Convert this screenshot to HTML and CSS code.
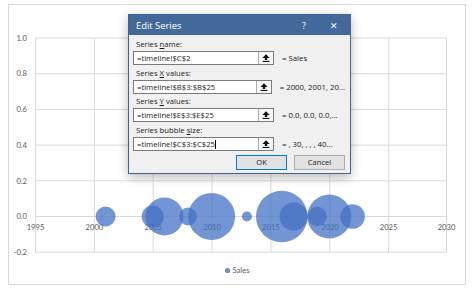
FILE: index.html
```html
<!DOCTYPE html>
<html>
<head>
<meta charset="utf-8">
<link rel="stylesheet" href="styles.css">
</head>
<body>
<div class="stage">
  <div class="chart">
    <svg class="plot" width="456" height="279" viewBox="9 5 456 279">
      <g class="grid">
        <line x1="35" y1="38" x2="447" y2="38"/>
        <line x1="35" y1="73.7" x2="447" y2="73.7"/>
        <line x1="35" y1="109.4" x2="447" y2="109.4"/>
        <line x1="35" y1="145.1" x2="447" y2="145.1"/>
        <line x1="35" y1="180.8" x2="447" y2="180.8"/>
        <line x1="35" y1="216.5" x2="447" y2="216.5"/>
        <line x1="35" y1="252.2" x2="447" y2="252.2"/>
        <line x1="35.5" y1="38" x2="35.5" y2="252.2"/>
        <line x1="94.4" y1="38" x2="94.4" y2="252.2"/>
        <line x1="153.2" y1="38" x2="153.2" y2="252.2"/>
        <line x1="212.1" y1="38" x2="212.1" y2="252.2"/>
        <line x1="270.9" y1="38" x2="270.9" y2="252.2"/>
        <line x1="329.8" y1="38" x2="329.8" y2="252.2"/>
        <line x1="388.6" y1="38" x2="388.6" y2="252.2"/>
        <line x1="446.5" y1="38" x2="446.5" y2="252.2"/>
      </g>
      <g class="ylabels">
        <text x="27" y="40.7">1.0</text>
        <text x="27" y="76.4">0.8</text>
        <text x="27" y="112.1">0.6</text>
        <text x="27" y="147.8">0.4</text>
        <text x="27" y="183.5">0.2</text>
        <text x="27" y="219.2">0.0</text>
        <text x="27" y="254.9">-0.2</text>
      </g>
      <g class="xlabels">
        <text x="35.5" y="229.5">1995</text>
        <text x="94.4" y="229.5">2000</text>
        <text x="153.2" y="229.5">2005</text>
        <text x="212.1" y="229.5">2010</text>
        <text x="270.9" y="229.5">2015</text>
        <text x="329.8" y="229.5">2020</text>
        <text x="388.6" y="229.5">2025</text>
        <text x="446.5" y="229.5">2030</text>
      </g>
      <g class="bubbles">
        <circle cx="105.6" cy="216.5" r="10"/>
        <circle cx="152.7" cy="216.5" r="11"/>
        <circle cx="164.5" cy="216.5" r="19"/>
        <circle cx="188" cy="216.5" r="9"/>
        <circle cx="211.6" cy="216.5" r="23.5"/>
        <circle cx="246.9" cy="216.5" r="5"/>
        <circle cx="281.8" cy="216.5" r="25.8"/>
        <circle cx="293.6" cy="216.5" r="14"/>
        <circle cx="317.2" cy="216.5" r="9.7"/>
        <circle cx="329.3" cy="216.5" r="22"/>
        <circle cx="352.6" cy="216.5" r="12.3"/>
      </g>
      <g class="legend">
        <circle cx="227.5" cy="270.5" r="2.6"/>
        <text x="232.5" y="273">Sales</text>
      </g>
    </svg>
  </div>

  <div class="dialog">
    <div class="titlebar">
      <span class="title">Edit Series</span>
      <span class="help">?</span>
      <span class="close">&#x2715;</span>
    </div>
    <div class="body">
      <div class="field">
        <div class="label">Series <u>n</u>ame:</div>
        <div class="row">
          <div class="input"><span class="text">=timeline!$C$2</span><span class="pick"><svg width="8" height="8" viewBox="0 0 8 8"><polygon points="4,0.3 7.6,3.9 5.2,3.9 5.2,5.9 2.8,5.9 2.8,3.9 0.4,3.9"/><rect x="0.6" y="6.9" width="6.8" height="1.1"/></svg></span></div>
          <span class="value">= Sales</span>
        </div>
      </div>
      <div class="field">
        <div class="label">Series <u>X</u> values:</div>
        <div class="row">
          <div class="input"><span class="text">=timeline!$B$3:$B$25</span><span class="pick"><svg width="8" height="8" viewBox="0 0 8 8"><polygon points="4,0.3 7.6,3.9 5.2,3.9 5.2,5.9 2.8,5.9 2.8,3.9 0.4,3.9"/><rect x="0.6" y="6.9" width="6.8" height="1.1"/></svg></span></div>
          <span class="value">= 2000, 2001, 20...</span>
        </div>
      </div>
      <div class="field">
        <div class="label">Series <u>Y</u> values:</div>
        <div class="row">
          <div class="input"><span class="text">=timeline!$E$3:$E$25</span><span class="pick"><svg width="8" height="8" viewBox="0 0 8 8"><polygon points="4,0.3 7.6,3.9 5.2,3.9 5.2,5.9 2.8,5.9 2.8,3.9 0.4,3.9"/><rect x="0.6" y="6.9" width="6.8" height="1.1"/></svg></span></div>
          <span class="value">= 0.0, 0.0, 0.0,...</span>
        </div>
      </div>
      <div class="field">
        <div class="label">Series bubble <u>s</u>ize:</div>
        <div class="row">
          <div class="input"><span class="text">=timeline!$C$3:$C$25<span class="caret"></span></span><span class="pick"><svg width="8" height="8" viewBox="0 0 8 8"><polygon points="4,0.3 7.6,3.9 5.2,3.9 5.2,5.9 2.8,5.9 2.8,3.9 0.4,3.9"/><rect x="0.6" y="6.9" width="6.8" height="1.1"/></svg></span></div>
          <span class="value">= , 30, , , , 40...</span>
        </div>
      </div>
      <div class="actions">
        <button class="btn ok">OK</button>
        <button class="btn cancel">Cancel</button>
      </div>
    </div>
  </div>
</div>
</body>
</html>
```
FILE: styles.css
```css
html, body {
  margin: 0;
  padding: 0;
  background: #ffffff;
}
.stage {
  position: relative;
  width: 474px;
  height: 291px;
  overflow: hidden;
}
.chart {
  margin: 4px 0 0 8px;
  width: 456px;
  height: 279px;
  border: 1px solid #d9d9d9;
}
.plot {
  display: block;
}
.grid line {
  stroke: #d9d9d9;
  stroke-width: 1;
}
.ylabels text {
  font-family: "Lato", "Liberation Sans", sans-serif;
  font-size: 7.6px;
  fill: #595959;
  text-anchor: end;
}
.xlabels text {
  font-family: "Lato", "Liberation Sans", sans-serif;
  font-size: 7.6px;
  fill: #595959;
  text-anchor: middle;
}
.bubbles circle {
  fill: #4472c4;
  fill-opacity: 0.75;
}
.legend circle {
  fill: #4472c4;
  fill-opacity: 0.8;
}
.legend text {
  font-family: "Lato", "Liberation Sans", sans-serif;
  font-size: 7.6px;
  fill: #595959;
}

.dialog {
  position: absolute;
  left: 128px;
  top: 14px;
  width: 221px;
  height: 158px;
  border: 1px solid #3f6597;
  background: #f0f0f0;
  box-shadow: 0 3px 10px rgba(0, 0, 0, 0.28);
  font-family: "Open Sans", "Noto Sans", sans-serif;
  color: #1a1a1a;
}
.titlebar {
  height: 20px;
  background: #43699a;
  color: #ffffff;
  display: flex;
  align-items: center;
  font-size: 9.4px;
}
.title {
  padding-left: 7px;
  flex: 1;
}
.help {
  width: 12px;
  text-align: center;
  font-size: 9px;
  margin-right: 18px;
}
.close {
  width: 12px;
  text-align: center;
  font-size: 9px;
  margin-right: 10px;
}
.body {
  padding: 3px 5px 0 4px;
}
.field {
  margin-bottom: 1.5px;
}
.label {
  height: 13px;
  line-height: 13px;
  font-size: 7.7px;
  padding-left: 3px;
}
.label u {
  text-decoration-thickness: 0.6px;
  text-underline-offset: 1px;
}
.row {
  display: flex;
  align-items: center;
  height: 14px;
}
.input {
  width: 139px;
  height: 12px;
  border: 1px solid #7a7a7a;
  background: #ffffff;
  display: flex;
}
.input .text {
  flex: 1;
  font-size: 7.7px;
  line-height: 12px;
  padding-left: 3px;
  white-space: nowrap;
  overflow: hidden;
}
.caret {
  display: inline-block;
  width: 0.8px;
  height: 9px;
  background: #000;
  vertical-align: -2px;
  margin-left: 0.5px;
}
.pick {
  width: 14px;
  flex: none;
  border-left: 1px solid #adadad;
  background: #f7f7f7;
  display: flex;
  align-items: center;
  justify-content: center;
}
.pick svg {
  fill: #111111;
}
.value {
  margin-left: 8px;
  font-size: 7.8px;
  white-space: nowrap;
}
.actions {
  display: flex;
  justify-content: flex-end;
  gap: 7px;
  margin-top: 4px;
}
.btn {
  width: 51px;
  height: 15px;
  padding: 0;
  background: #e1e1e1;
  border: 1px solid #adadad;
  font-family: "Open Sans", "Noto Sans", sans-serif;
  font-size: 7.6px;
  color: #1a1a1a;
}
.btn.ok {
  border-color: #0078d7;
}
```
